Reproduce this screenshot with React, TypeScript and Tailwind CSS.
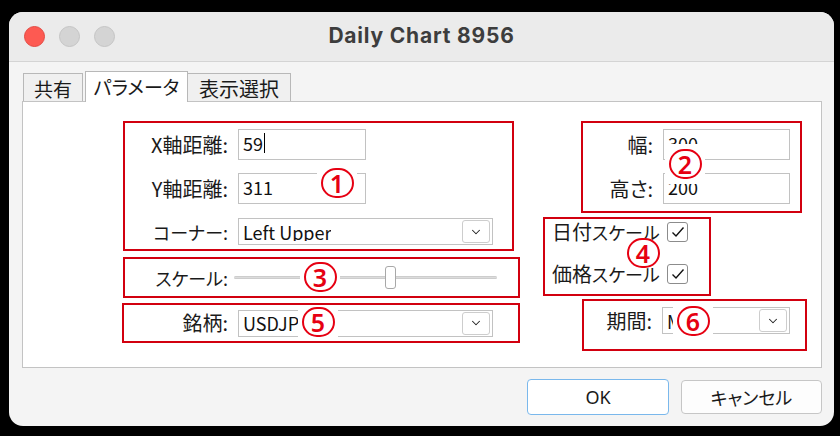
import React from 'react';
import { ChevronDown } from 'lucide-react';

// 入力欄
function TextBox({ value, cursor = false, w }: { value: string; cursor?: boolean; w: string }) {
  return (
    <div className={`${w} h-[31px] ml-[10px] bg-white border border-[#c2c2c2] flex items-center pl-[4px] pb-[3px] text-[18px] leading-none text-[#111]`}>
      <span>{value}</span>
      {cursor && <span className="ml-[1px] w-px h-[20px] bg-black" />}
    </div>
  );
}

// ドロップダウン
function Select({ value, w }: { value: string; w: string }) {
  return (
    <div className={`${w} h-[27px] ml-[10px] bg-white border border-[#c2c2c2] flex items-center justify-between pl-[4px] pr-[2px] text-[18px] leading-none text-[#111]`}>
      <span className="whitespace-nowrap overflow-hidden">{value}</span>
      <span className="w-[28px] h-[23px] shrink-0 border border-[#cdcdcd] rounded-[3px] bg-white flex items-center justify-center">
        <ChevronDown size={14} strokeWidth={1.8} color="#222" />
      </span>
    </div>
  );
}

function Check() {
  return (
    <span className="w-[21px] h-[20px] shrink-0 bg-white border border-[#8c8c8c] rounded-[3px] flex items-center justify-center">
      <svg width="14" height="12" viewBox="0 0 14 12" fill="none">
        <path d="M1.5 6.5 L5 10 L12.5 1.5" stroke="#111" strokeWidth="1.4" />
      </svg>
    </span>
  );
}

// ラベル（漢字は20px、かなは18px）
function Label({ children, w }: { children: React.ReactNode; w: string }) {
  return <span className={`${w} shrink-0 text-right text-[20px] leading-none whitespace-nowrap`}>{children}</span>;
}

function Kana({ children }: { children: React.ReactNode }) {
  return <span className="text-[18px]">{children}</span>;
}

// 注釈の丸数字（白地で下のものを隠す）
function Badge({ n, cls }: { n: string; cls: string }) {
  return (
    <span className={`absolute flex items-center justify-center ${cls}`}>
      <span className="w-[33px] h-[30px] rounded-full border-2 border-[#e60012] flex items-center justify-center text-[#e60012] font-['Noto_Sans',sans-serif] font-semibold text-[25px] leading-none pt-[1px]">
        {n}
      </span>
    </span>
  );
}

const box = 'border-2 border-[#d2000f]';

export default function App() {
  return (
    <div className="relative w-[840px] h-[436px] bg-black pl-[9px] pt-[12px] font-['Noto_Sans_CJK_JP','Noto_Sans',sans-serif] text-[#1a1a1a] [font-feature-settings:'palt']">
      <div className="w-[825px] h-[414px] rounded-[14px] bg-[#f4f4f4] overflow-hidden flex flex-col">
        {/* タイトルバー */}
        <div className="h-[50px] shrink-0 bg-[#ebebeb] border-b border-[#d4d4d4] grid grid-cols-[1fr_auto_1fr] items-center">
          <div className="flex gap-[14px] pl-[15px]">
            <span className="w-[21px] h-[21px] rounded-full bg-[#fd5a52] border border-[#e24a43]" />
            <span className="w-[21px] h-[21px] rounded-full bg-[#d4d4d4] border border-[#c4c4c4]" />
            <span className="w-[21px] h-[21px] rounded-full bg-[#d4d4d4] border border-[#c4c4c4]" />
          </div>
          <div className="font-['Inter',sans-serif] font-bold text-[21px] tracking-[0.8px] text-[#3d3d3d] pb-[1px]">Daily Chart 8956</div>
          <div />
        </div>

        <div className="pl-[13px] pr-[12px] pt-[9px] flex flex-col">
          {/* タブ */}
          <div className="flex items-end h-[30px] pl-[1px]">
            <div className="w-[60px] h-[28px] bg-[#f0f0f0] border border-b-0 border-[#b8b8b8] flex items-center justify-center text-[19px] leading-none pt-[2px]">共有</div>
            <div className="ml-[2px] w-[103px] h-[31px] -mb-px relative z-10 bg-white border border-b-0 border-[#b8b8b8] flex items-center justify-center text-[19px] leading-none pb-[2px]">パラメータ</div>
            <div className="w-[103px] h-[28px] bg-[#f0f0f0] border border-l-0 border-b-0 border-[#b8b8b8] flex items-center justify-center text-[20px] leading-none pt-[2px]">表示選択</div>
          </div>

          {/* パネル */}
          <div className="w-[800px] h-[267px] bg-white border border-[#c3c3c3] pl-[99px] pt-[19px] flex gap-[22px]">
            {/* 左列 */}
            <div className="w-[399px] flex flex-col">
              <div className={`ml-[1px] w-[391px] h-[130px] ${box} flex flex-col pt-[6px]`}>
                <div className="flex items-center">
                  <Label w="w-[103px]">X軸距離:</Label>
                  <TextBox value="59" cursor w="w-[128px]" />
                </div>
                <div className="flex items-center mt-[13px]">
                  <Label w="w-[103px]">Y軸距離:</Label>
                  <TextBox value="311" w="w-[128px]" />
                </div>
                <div className="flex items-center mt-[14px]">
                  <Label w="w-[103px]"><Kana>コーナー:</Kana></Label>
                  <Select value="Left Upper" w="w-[255px]" />
                </div>
              </div>

              <div className={`mt-[6px] ml-[1px] w-[397px] h-[41px] ${box} flex items-center`}>
                <Label w="w-[103px]"><Kana>スケール:</Kana></Label>
                <div className="relative ml-[6px] w-[263px] h-[24px] flex items-center">
                  <div className="w-full h-[3px] rounded-full bg-[#dcdcdc] border-y border-[#cdcdcd]" />
                  <div className="absolute left-[151px] top-[0px] w-[11px] h-[23px] rounded-[3px] bg-white border border-[#a8a8a8]" />
                </div>
              </div>

              <div className={`mt-[5px] w-[398px] h-[40px] ${box} flex items-center`}>
                <Label w="w-[104px]">銘柄:</Label>
                <Select value="USDJPY" w="w-[255px]" />
              </div>
            </div>

            {/* 右列 */}
            <div className="w-[264px] flex flex-col">
              <div className={`ml-[38px] w-[221px] h-[92px] ${box} flex flex-col pt-[6px]`}>
                <div className="flex items-center">
                  <Label w="w-[70px]">幅:</Label>
                  <TextBox value="300" w="w-[127px]" />
                </div>
                <div className="flex items-center mt-[13px]">
                  <Label w="w-[70px]">高さ:</Label>
                  <TextBox value="200" w="w-[127px]" />
                </div>
              </div>

              <div className={`mt-[4px] w-[168px] h-[79px] ${box} flex flex-col pt-[3px] pl-[7px]`}>
                <div className="flex items-center h-[20px]">
                  <span className="w-[115px] overflow-hidden whitespace-nowrap text-[20px] leading-none">日付<Kana>スケール</Kana></span>
                  <Check />
                </div>
                <div className="flex items-center h-[20px] mt-[22px]">
                  <span className="w-[115px] overflow-hidden whitespace-nowrap text-[20px] leading-none">価格<Kana>スケール</Kana></span>
                  <Check />
                </div>
              </div>

              <div className={`mt-[3px] ml-[39px] w-[225px] h-[52px] ${box} flex flex-col pt-[6px]`}>
                <div className="flex items-center">
                  <Label w="w-[68px]">期間:</Label>
                  <Select value="M1" w="w-[128px]" />
                </div>
              </div>
            </div>
          </div>

          {/* ボタン */}
          <div className="mt-[11px] flex justify-end items-start gap-[12px]">
            <button className="w-[142px] h-[36px] bg-white border border-[#7ab8ec] rounded-[4px] text-[18px] leading-none font-['Noto_Sans',sans-serif]">OK</button>
            <button className="mt-px w-[141px] h-[34px] bg-[#fdfdfd] border border-[#c6c6c6] rounded-[4px] text-[18px] leading-none">キャンセル</button>
          </div>
        </div>
      </div>

      <Badge n="1" cls="left-[317px] top-[166px] w-[40px] h-[34px] bg-white" />
      <Badge n="2" cls="left-[665px] top-[144px] w-[40px] h-[40px] bg-white" />
      <Badge n="3" cls="left-[300px] top-[260px] w-[40px] h-[34px] bg-white" />
      <Badge n="4" cls="left-[623px] top-[236px] w-[40px] h-[34px]" />
      <Badge n="5" cls="left-[298px] top-[305px] w-[40px] h-[34px] bg-white" />
      <Badge n="6" cls="left-[673px] top-[304px] w-[40px] h-[34px] bg-white" />
    </div>
  );
}
